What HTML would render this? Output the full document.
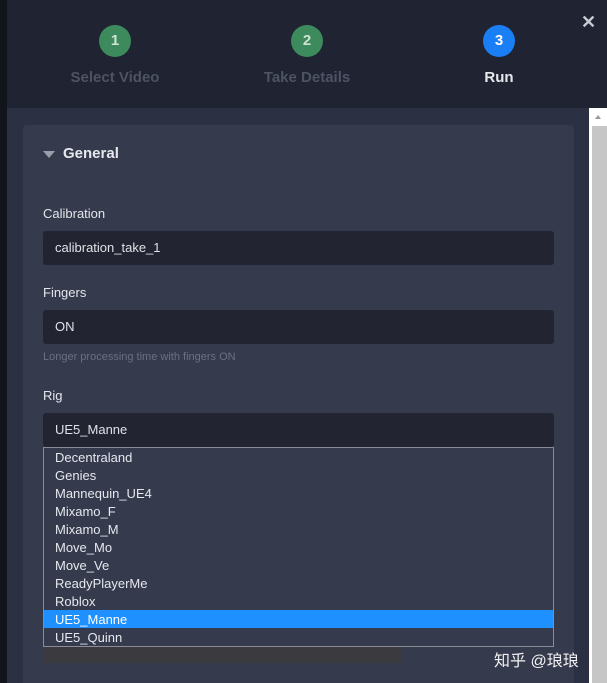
<!DOCTYPE html>
<html><head><meta charset="utf-8"><style>
*{margin:0;padding:0;box-sizing:border-box}
html,body{width:607px;height:683px;overflow:hidden}
body{background:#2b3042;font-family:"Liberation Sans","Noto Sans CJK SC",sans-serif;position:relative}
.abs{position:absolute}
.left{left:0;top:0;width:7px;height:683px;background:#12141b}
.head{left:7px;top:0;width:600px;height:108px;background:#1f2332}
.circ{width:32px;height:32px;border-radius:50%;color:#cfe3d6;font-weight:bold;font-size:15px;text-align:center;line-height:32px}
.step{font-size:15px;font-weight:bold;color:#4d5363;text-align:center;width:160px}
.card{left:23px;top:125px;width:551px;height:558px;background:#353a4d;border-radius:4px 4px 0 0}
.lbl{font-size:13px;color:#e4e6ec}
.inp{left:43px;width:511px;height:34px;background:#222531;border-radius:3px;color:#dfe1e8;font-size:13px;line-height:34px;padding-left:12px}
.dd{left:43px;top:447px;width:511px;height:200px;background:#353a4d;border:1px solid #8a8d98}
.dd div{height:18px;line-height:19px;padding-left:11px;font-size:13px;color:#e6e8ee}
.dd .sel{background:#1e90ff;color:#fff}
</style></head><body>
<div class="abs left"></div>
<div class="abs head"></div>
<div class="abs circ" style="left:99px;top:25px;background:#3d8a5c">1</div>
<div class="abs circ" style="left:291px;top:25px;background:#3d8a5c">2</div>
<div class="abs circ" style="left:483px;top:25px;background:#1a7ef5;color:#fff">3</div>
<div class="abs step" style="left:35px;top:69px">Select Video</div>
<div class="abs step" style="left:227px;top:69px">Take Details</div>
<div class="abs step" style="left:419px;top:69px;color:#e8e9ee">Run</div>
<div class="abs" style="left:581px;top:12px;color:#c8cad2;font-size:18px;font-weight:bold">✕</div>
<div class="abs" style="left:589px;top:108px;width:18px;height:575px;background:#fff"></div>
<div class="abs" style="left:592px;top:126px;width:15px;height:557px;background:#c6c6c6"></div>
<div class="abs" style="left:595px;top:115px;width:0;height:0;border-left:3px solid transparent;border-right:3px solid transparent;border-bottom:4px solid #999"></div>
<div class="abs card"></div>
<div class="abs" style="left:43px;top:151px;width:0;height:0;border-left:6px solid transparent;border-right:6px solid transparent;border-top:7px solid #9a9eaa"></div>
<div class="abs" style="left:63px;top:145px;font-size:15px;font-weight:bold;color:#e6e8ee">General</div>
<div class="abs lbl" style="left:43px;top:206px">Calibration</div>
<div class="abs inp" style="top:231px">calibration_take_1</div>
<div class="abs lbl" style="left:43px;top:285px">Fingers</div>
<div class="abs inp" style="top:310px">ON</div>
<div class="abs" style="left:43px;top:351px;font-size:11px;color:#6b7080">Longer processing time with fingers ON</div>
<div class="abs lbl" style="left:43px;top:388px">Rig</div>
<div class="abs inp" style="top:413px">UE5_Manne</div>
<div class="abs" style="left:43px;top:647px;width:358px;height:16px;background:#3b3a3f"></div>
<div class="abs dd">
<div>Decentraland</div><div>Genies</div><div>Mannequin_UE4</div><div>Mixamo_F</div><div>Mixamo_M</div><div>Move_Mo</div><div>Move_Ve</div><div>ReadyPlayerMe</div><div>Roblox</div><div class="sel">UE5_Manne</div><div>UE5_Quinn</div>
</div>
<div class="abs" style="left:494px;top:647px;font-size:16px;color:#f2f2f2;white-space:nowrap">知乎 @琅琅</div>
</body></html>
